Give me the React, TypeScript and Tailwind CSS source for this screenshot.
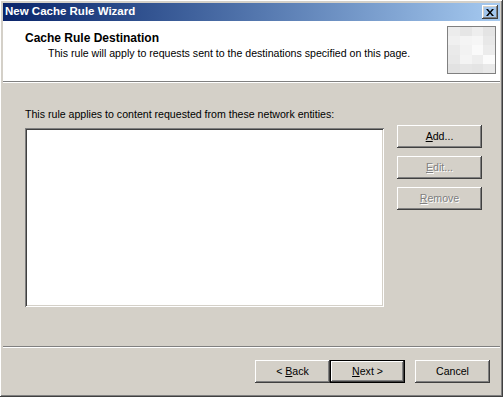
import React from "react";

const raised =
  "shadow-[inset_-1px_-1px_#404040,inset_1px_1px_#ffffff,inset_-2px_-2px_#808080,inset_2px_2px_#d4d0c8]";

function Btn({
  label,
  u,
  rest,
  pre = "",
  disabled = false,
  isDefault = false,
  className = "",
}: {
  label?: string;
  u: string;
  rest: string;
  pre?: string;
  disabled?: boolean;
  isDefault?: boolean;
  className?: string;
}) {
  return (
    <div
      className={`h-[23px] flex items-center justify-center bg-[#d4d0c8] text-[10.6px] ${
        isDefault
          ? "shadow-[inset_0_0_0_1px_#000000,inset_-2px_-2px_#404040,inset_2px_2px_#ffffff,inset_-3px_-3px_#808080]"
          : raised
      } ${disabled ? "text-[#808080] [text-shadow:1px_1px_0_#ffffff]" : "text-black"} ${className}`}
    >
      <span>
        {pre}
        <span className="underline underline-offset-[1px]">{u}</span>
        {rest}
        {label}
      </span>
    </div>
  );
}

export default function App() {
  const cells = [
    "#ececec", "#e6e6e6", "#eeeeee", "#e4e4e4",
    "#f0f0f0", "#f4f4f4", "#f6f6f6", "#e8e8e8",
    "#eaeaea", "#f2f2f2", "#fafafa", "#ececec",
    "#e8e8e8", "#f4f4f4", "#eeeeee", "#fbfbfb",
    "#e2e2e2", "#e6e6e6", "#e4e4e4", "#e9e9e9",
  ];
  return (
    <div
      className={`w-[503px] h-[397px] bg-[#d4d0c8] p-[3px] flex flex-col overflow-hidden ${raised}`}
      style={{ fontFamily: '"Liberation Sans", Arial, sans-serif' }}
    >
      {/* title bar */}
      <div className="h-[18px] flex items-center justify-between pl-[2px] pr-[2px] bg-gradient-to-r from-[#0a246a] to-[#a6caf0]">
        <span className="text-white font-bold text-[11.5px] leading-none">New Cache Rule Wizard</span>
        <div className={`w-[16px] h-[14px] flex items-center justify-center ${raised}`}>
          <svg width="8" height="7" viewBox="0 0 8 7">
            <path d="M0 0h2l2 2.5L6 0h2L5 3.5 8 7H6L4 4.5 2 7H0l3-3.5z" fill="#000" />
          </svg>
        </div>
      </div>

      {/* header */}
      <div className="h-[61px] bg-white flex justify-between border-b border-[#808080] shadow-[0_1px_0_#ffffff] mb-[1px]">
        <div className="pl-[22px] pt-[10px]">
          <div className="font-bold text-[12px] leading-[14px] text-black">Cache Rule Destination</div>
          <div className="pl-[23px] pt-[1px] text-[10.6px] leading-[14px] text-black">
            This rule will apply to requests sent to the destinations specified on this page.
          </div>
        </div>
        <div className="mr-[4px] mt-[5px] w-[49px] h-[48px] border border-[#808080] grid grid-cols-4 grid-rows-5">
          {cells.map((c, i) => (
            <div key={i} style={{ background: c }} />
          ))}
        </div>
      </div>

      {/* body */}
      <div className="flex-1 flex flex-col pl-[22px] pr-[17px]">
        <div className="pt-[25px] text-[10.6px] leading-[13px] text-black">
          This rule applies to content requested from these network entities:
        </div>
        <div className="flex mt-[4px]">
          <div className="w-[359px] h-[179px] bg-white shadow-[inset_1px_1px_#808080,inset_-1px_-1px_#ffffff,inset_2px_2px_#404040,inset_-2px_-2px_#d4d0c8] mt-[3px]" />
          <div className="ml-[13px] w-[85px] flex flex-col gap-[8px]">
            <Btn u="A" rest="dd..." />
            <Btn u="E" rest="dit..." disabled />
            <Btn u="R" rest="emove" disabled />
          </div>
        </div>
        <div className="flex-1" />
      </div>

      {/* footer */}
      <div className="border-t border-[#808080] shadow-[inset_0_1px_0_#ffffff] h-[48px] flex items-start justify-end pt-[13px] pr-[10px]">
        <Btn pre="< " u="B" rest="ack" className="w-[75px]" />
        <Btn u="N" rest="ext >" isDefault className="w-[75px]" />
        <Btn u="" rest="" label="Cancel" className="w-[75px] ml-[10px]" />
      </div>
    </div>
  );
}
